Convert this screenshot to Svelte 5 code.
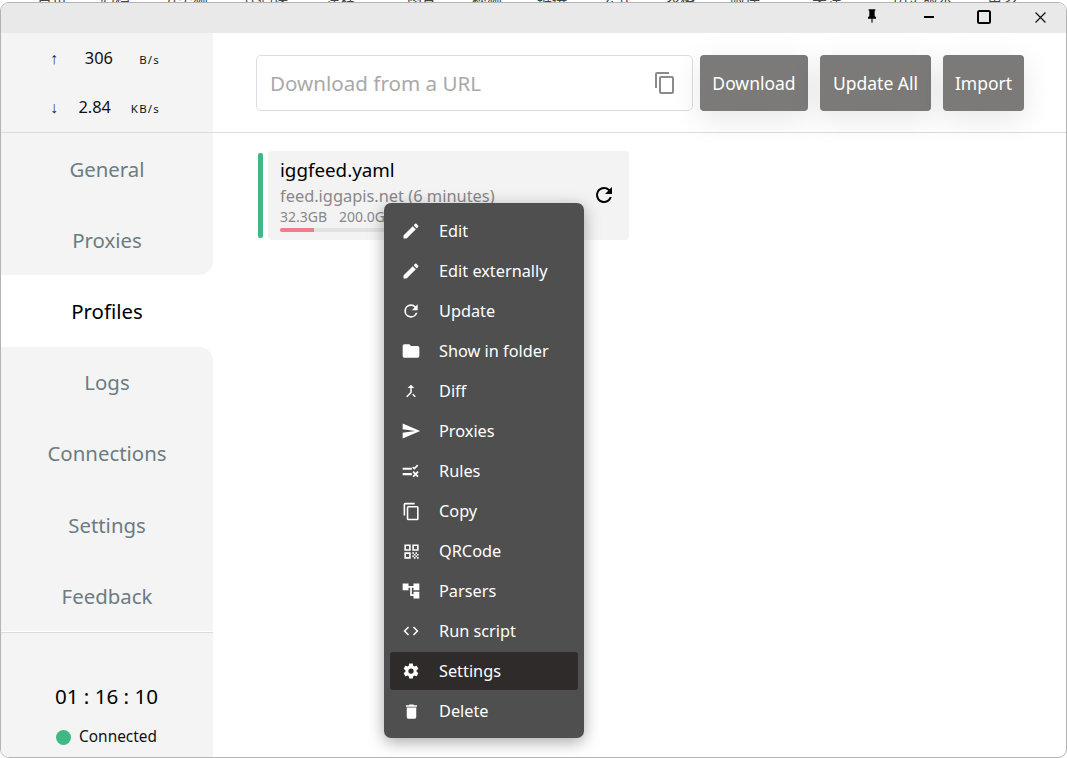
<script>
	const topLinks = [
		['首页', 37], ['归档', 100], ['分类频', 163], ['代码块', 243], ['注释', 325], ['图片', 407], ['视频', 472], ['链接', 537], ['公式', 602], ['表格', 665], ['附件', 730], ['关注', 812], ['历史版本', 893], ['更多', 987]
	];

	const nav = ['General', 'Proxies', 'Profiles', 'Logs', 'Connections', 'Settings', 'Feedback'];
	let active = $state('Profiles');

	const pen = 'M3 17.25V21h3.75L17.81 9.94l-3.75-3.75L3 17.25zM20.71 7.04a1 1 0 0 0 0-1.41l-2.34-2.34a1 1 0 0 0-1.41 0l-1.83 1.83 3.75 3.75 1.83-1.83z';
	const copy = 'M16 1H4a2 2 0 0 0-2 2v14h2V3h12V1zm3 4H8a2 2 0 0 0-2 2v14a2 2 0 0 0 2 2h11a2 2 0 0 0 2-2V7a2 2 0 0 0-2-2zm0 16H8V7h11v14z';
	const refresh = 'M17.65 6.35A7.96 7.96 0 0 0 12 4a8 8 0 1 0 7.73 10h-2.08A6 6 0 1 1 12 6c1.66 0 3.14.69 4.22 1.78L13 11h7V4l-2.35 2.35z';

	const menu = [
		{ label: 'Edit', icon: pen },
		{ label: 'Edit externally', icon: pen },
		{ label: 'Update', icon: refresh },
		{ label: 'Show in folder', icon: 'M10 4H4a2 2 0 0 0-2 2v12a2 2 0 0 0 2 2h16a2 2 0 0 0 2-2V8a2 2 0 0 0-2-2h-8l-2-2z' },
		{ label: 'Diff', size: 18, icon: 'M17 20.41 18.41 19 15 15.59 13.59 17 17 20.41zM7.5 8H11v5.59L5.59 19 7 20.41l6-6V8h3.5L12 3.5 7.5 8z' },
		{ label: 'Proxies', icon: 'M2.01 21 23 12 2.01 3 2 10l15 2-15 2z' },
		{ label: 'Rules', icon: 'M2 8h11v2.6H2zM2 14.5h11v2.6H2zM16 10.6l-2.6-2.6 1.4-1.4 1.2 1.2 3.4-3.6 1.4 1.4zM15.3 19.5l-1.5-1.5 2.2-2.2-2.2-2.2 1.5-1.5 2.2 2.2 2.2-2.2 1.5 1.5-2.2 2.2 2.2 2.2-1.5 1.5-2.2-2.2z' },
		{ label: 'Copy', size: 19, icon: copy },
		{ label: 'QRCode', size: 19, icon: 'M3 11h8V3H3v8zm2-6h4v4H5V5zM3 21h8v-8H3v8zm2-6h4v4H5v-4zM13 3v8h8V3h-8zm6 6h-4V5h4v4zM13 13h2v2h-2zM15 15h2v2h-2zM13 17h2v2h-2zM15 19h2v2h-2zM17 13h2v2h-2zM19 15h2v2h-2zM17 17h2v2h-2zM19 19h2v2h-2z' },
		{ label: 'Parsers', icon: 'M22 11V3h-7v3H9V3H2v8h7V8h2v10h4v3h7v-8h-7v3h-2V8h2v3z' },
		{ label: 'Run script', size: 18, icon: 'M9.4 16.6 4.8 12l4.6-4.6L8 6l-6 6 6 6 1.4-1.4zm5.2 0 4.6-4.6-4.6-4.6L16 6l6 6-6 6-1.4-1.4z' },
		{ label: 'Settings', size: 18, hover: true, icon: 'M19.43 12.98c.04-.32.07-.64.07-.98s-.03-.66-.07-.98l2.11-1.65a.5.5 0 0 0 .12-.64l-2-3.46a.5.5 0 0 0-.61-.22l-2.49 1a7.3 7.3 0 0 0-1.69-.98l-.38-2.65A.49.49 0 0 0 14 2h-4a.49.49 0 0 0-.49.42l-.38 2.65c-.61.25-1.17.59-1.69.98l-2.49-1a.49.49 0 0 0-.61.22l-2 3.46a.49.49 0 0 0 .12.64l2.11 1.65c-.04.32-.07.65-.07.98s.03.66.07.98l-2.11 1.65a.5.5 0 0 0-.12.64l2 3.46c.12.22.39.3.61.22l2.49-1c.52.4 1.08.73 1.69.98l.38 2.65c.03.24.24.42.49.42h4c.25 0 .46-.18.49-.42l.38-2.65a7.7 7.7 0 0 0 1.69-.98l2.49 1c.23.09.49 0 .61-.22l2-3.46a.5.5 0 0 0-.12-.64l-2.11-1.65zM12 15.5a3.5 3.5 0 1 1 0-7 3.5 3.5 0 0 1 0 7z' },
		{ label: 'Delete', size: 19, icon: 'M6 19a2 2 0 0 0 2 2h8a2 2 0 0 0 2-2V7H6v12zM19 4h-3.5l-1-1h-5l-1 1H5v2h14V4z' }
	];
</script>

<div class="page">
	<div class="behind">
		{#each topLinks as [text, x]}
			<span style="left: {x}px">{text}</span>
		{/each}
	</div>

	<div class="window">
		<header class="titlebar">
			<svg class="pin" viewBox="0 0 24 24"><path d="M16 12V4h1V2H7v2h1v8l-2 2v2h5.2v6h1.6v-6H18v-2l-2-2z" /></svg>
			<svg class="min" viewBox="0 0 10 10"><path d="M0 5h10" /></svg>
			<svg class="max" viewBox="0 0 14 14"><rect x="1" y="1" width="12" height="12" rx="1.5" /></svg>
			<svg class="close" viewBox="0 0 10 10"><path d="M.5.5l9 9M9.5.5l-9 9" /></svg>
		</header>

		<div class="body">
			<aside class="sidebar">
				<div class="traffic">
					<div class="rate">
						<span class="arrow">↑</span><span class="num">306</span><span class="unit">B/s</span>
					</div>
					<div class="rate down">
						<span class="arrow">↓</span><span class="num">2.84</span><span class="unit">KB/s</span>
					</div>
				</div>

				<nav>
					{#each nav as item, i}
						<button
							class="nav-item"
							class:active={item === active}
							class:before={nav[i + 1] === active}
							class:after={nav[i - 1] === active}
							onclick={() => (active = item)}>{item}</button>
					{/each}
				</nav>

				<div class="status">
					<div class="clock">01 : 16 : 10</div>
					<div class="connected"><i></i>Connected</div>
				</div>
			</aside>

			<main>
				<div class="toolbar">
					<div class="url">
						<input placeholder="Download from a URL" />
						<svg viewBox="0 0 24 24"><path d={copy} /></svg>
					</div>
					<button class="primary dl">Download</button>
					<button class="primary upd">Update All</button>
					<button class="primary imp">Import</button>
				</div>

				<div class="profiles">
					<div class="profile-bar"></div>
					<div class="profile">
						<div class="info">
							<div class="name">iggfeed.yaml</div>
							<div class="host">feed.iggapis.net (6 minutes)</div>
							<div class="usage"><span>32.3GB</span><span>200.0GB</span></div>
							<div class="meter"><div class="fill" style="width: 12%"></div></div>
						</div>
						<svg class="refresh" viewBox="0 0 24 24"><path d={refresh} /></svg>
					</div>
				</div>
			</main>
		</div>

		<ul class="menu">
			{#each menu as item}
				<li class:hover={item.hover}>
					<div class="ic">
						<svg width={item.size ?? 20} height={item.size ?? 20} viewBox="0 0 24 24"><path d={item.icon} /></svg>
					</div>
					<span>{item.label}</span>
				</li>
			{/each}
		</ul>
	</div>
</div>

<style>
	:global(body) {
		margin: 0;
		background: #fff;
		overflow: hidden;
		font-family: "Noto Sans", "Open Sans", sans-serif;
	}

	.page {
		position: relative;
		height: 758px;
		overflow: hidden;
	}

	.behind span {
		position: absolute;
		top: -11px;
		font: 15px "Noto Sans CJK SC", sans-serif;
		color: #444;
		line-height: 20px;
	}

	.window {
		position: absolute;
		top: 2px;
		left: 0;
		width: 1065px;
		height: 754px;
		border: 1px solid #b3b3b3;
		border-radius: 9px;
		overflow: hidden;
		background: #fff;
		display: flex;
		flex-direction: column;
	}

	.titlebar {
		height: 30px;
		flex: none;
		background: #e9e9e9;
		position: relative;
	}

	.titlebar svg {
		position: absolute;
	}

	.pin {
		left: 863px;
		top: 5px;
		width: 16px;
		height: 16px;
		fill: #000;
	}

	.min {
		left: 923px;
		top: 9px;
		width: 10px;
		height: 10px;
		stroke: #000;
		stroke-width: 2;
	}

	.max {
		left: 976px;
		top: 7px;
		width: 14px;
		height: 14px;
		fill: none;
		stroke: #000;
		stroke-width: 2;
	}

	.close {
		left: 1034px;
		top: 9px;
		width: 11px;
		height: 11px;
		stroke: #111;
		stroke-width: 1.1;
	}

	.body {
		flex: 1;
		display: flex;
		min-height: 0;
	}

	.sidebar {
		width: 212px;
		flex: none;
		display: flex;
		flex-direction: column;
		background: #f4f4f4;
	}

	.traffic {
		height: 100px;
		flex: none;
		box-sizing: border-box;
		border-bottom: 1px solid #dcdcdc;
	}

	.rate {
		display: grid;
		grid-template-columns: 70px 42px 47px;
		align-items: baseline;
		height: 49px;
		line-height: 50px;
		color: #111;
	}

	.arrow {
		font-family: "Liberation Sans", sans-serif;
		font-size: 16px;
		padding-left: 49px;
		color: #1d1d5f;
	}

	.num {
		font-size: 16.4px;
		text-align: right;
	}

	.down .num {
		padding-right: 2px;
	}

	.unit {
		font-size: 11.5px;
		text-align: right;
		letter-spacing: 1.2px;
	}

	nav {
		display: flex;
		flex-direction: column;
		background: #fff;
		height: 499px;
		flex: none;
	}

	.nav-item {
		height: 71.2px;
		flex: none;
		border: none;
		background: #f4f4f4;
		font: inherit;
		font-size: 20.4px;
		color: #6b7c82;
		cursor: pointer;
		padding: 0;
	}

	.nav-item.active {
		background: #fff;
		color: #000;
	}

	.nav-item.before {
		border-bottom-right-radius: 14px;
	}

	.nav-item.after {
		border-top-right-radius: 14px;
	}

	.status {
		flex: 1;
		border-top: 1px solid #dcdcdc;
		display: flex;
		flex-direction: column;
		align-items: center;
	}

	.clock {
		margin-top: 49px;
		font-size: 20.6px;
		line-height: 28px;
		color: #000;
		margin-right: 1px;
	}

	.connected {
		margin-top: 15px;
		margin-right: 1px;
		font-size: 15.4px;
		line-height: 24px;
		color: #111;
		display: flex;
		align-items: center;
		gap: 8px;
	}

	.connected i {
		width: 15px;
		height: 15px;
		border-radius: 50%;
		background: #40b884;
	}

	main {
		flex: 1;
		min-width: 0;
	}

	.toolbar {
		height: 100px;
		box-sizing: border-box;
		border-bottom: 1px solid #dcdcdc;
		padding: 22px 0 0 43px;
		display: flex;
		align-items: flex-start;
	}

	.url {
		width: 437px;
		height: 56px;
		box-sizing: border-box;
		border: 1px solid #dcdcdc;
		border-radius: 5px;
		display: flex;
		align-items: center;
		padding: 0 15px 0 13px;
		background: #fff;
	}

	.url input {
		flex: 1;
		border: none;
		outline: none;
		font: inherit;
		font-size: 20.6px;
		min-width: 0;
		padding: 0;
		background: transparent;
	}

	.url input::placeholder {
		color: #a9a9a9;
		opacity: 1;
	}

	.url svg {
		width: 24px;
		height: 24px;
		fill: #8b8b8b;
	}

	.primary {
		height: 56px;
		border: none;
		border-radius: 4px;
		background: #7c7a78;
		color: #fff;
		font: inherit;
		font-size: 17.5px;
		padding: 0;
		box-shadow: 0 8px 30px rgba(0, 0, 0, 0.1);
		cursor: pointer;
	}

	.dl { width: 108px; margin-left: 7px; }
	.upd { width: 111px; margin-left: 12px; }
	.imp { width: 81px; margin-left: 12px; }

	.profiles {
		padding: 18px 0 0 45px;
		display: flex;
	}

	.profile-bar {
		width: 5px;
		height: 85px;
		margin-top: 2px;
		border-radius: 2px;
		background: #40b884;
	}

	.profile {
		margin-left: 5px;
		width: 361px;
		height: 89px;
		background: #f3f3f3;
		border-radius: 4px;
		box-sizing: border-box;
		padding: 7px 13px 0 12px;
		display: flex;
		justify-content: space-between;
		align-items: center;
	}

	.info {
		flex: 1;
		align-self: flex-start;
	}

	.name {
		font-size: 18.8px;
		line-height: 24px;
		color: #000;
	}

	.host {
		font-size: 16.4px;
		line-height: 24px;
		color: #888;
		margin-top: 2px;
	}

	.usage {
		font-size: 14px;
		line-height: 18px;
		color: #888;
		display: flex;
		gap: 12px;
	}

	.meter {
		height: 4px;
		width: 280px;
		margin-top: 2px;
		background: #e2e2e2;
		border-radius: 2px;
		overflow: hidden;
	}

	.fill {
		height: 100%;
		background: #f47c8a;
	}

	.refresh {
		width: 24px;
		height: 24px;
		fill: #000;
		margin-bottom: 9px;
	}

	.menu {
		position: absolute;
		left: 383px;
		top: 200px;
		width: 200px;
		height: 535px;
		margin: 0;
		padding: 9px 6px 0;
		box-sizing: border-box;
		list-style: none;
		background: #4f4f4f;
		border-radius: 7px;
		box-shadow: 0 4px 16px rgba(0, 0, 0, 0.35);
		color: #fff;
	}

	.menu li {
		height: 38px;
		margin-bottom: 2px;
		display: flex;
		align-items: center;
		padding-left: 11px;
		border-radius: 3px;
		font-size: 16.3px;
	}

	.menu li.hover {
		background: #302b2b;
	}

	.ic {
		width: 20px;
		height: 20px;
		margin-right: 18px;
		flex: none;
		display: flex;
		align-items: center;
		justify-content: center;
	}

	.ic svg {
		fill: #fff;
	}
</style>
